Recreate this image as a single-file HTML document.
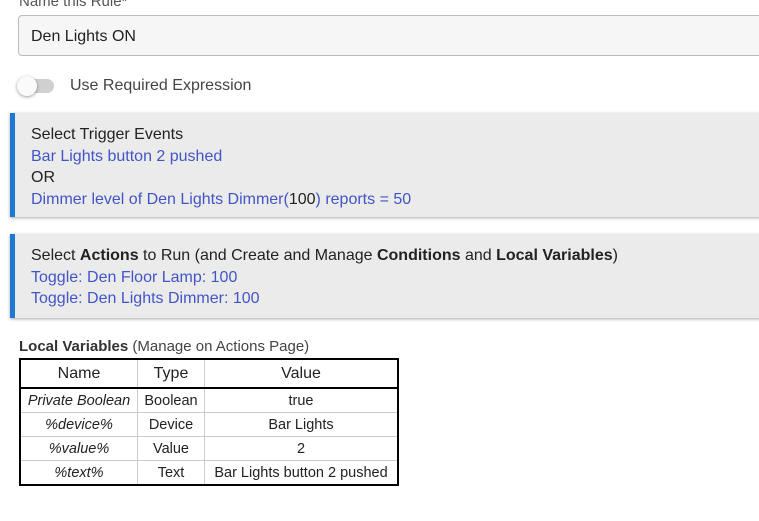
<!DOCTYPE html>
<html><head><style>
body{margin:0;width:759px;height:521px;background:#fff;font-family:"Liberation Sans",sans-serif;position:relative;overflow:hidden;color:#222}
.a{position:absolute}
.lbl{left:19px;top:-7px;font-size:15px;color:#555}
.inp{left:18px;top:15px;width:760px;height:41px;border:1px solid #bbb;border-radius:4px;background:#f6f6f6;box-sizing:border-box}
.inp span{position:absolute;left:12px;top:12px;font-size:16px;color:#222}
.track{left:25px;top:79px;width:29px;height:14px;border-radius:7px;background:#d0d0d0}
.knob{left:17px;top:76px;width:20px;height:20px;border-radius:50%;background:#fafafa;box-shadow:0 1px 3px rgba(0,0,0,.4)}
.tl{left:70px;top:77px;font-size:16px;color:#444}
.panel{left:10px;width:760px;background:#ebebeb;border-left:5px solid #1f78d1;box-shadow:0 1px 3px rgba(0,0,0,.35);box-sizing:border-box;padding:11px 0 0 16px;font-size:16px;line-height:21.5px}
.b{color:#4255c8}
table{position:absolute;left:19px;top:358px;border-collapse:collapse;border:2px solid #000;font-size:14.5px}
td,th{border:1px solid #ccc;text-align:center;padding:0 3px;height:23px;font-weight:normal}
th{font-size:16px;height:27px;border-bottom:2px solid #000}
td:first-child{font-style:italic}
</style></head><body>
<div class="a lbl">Name this Rule*</div>
<div class="a inp"><span>Den Lights ON</span></div>
<div class="a track"></div><div class="a knob"></div>
<div class="a tl">Use Required Expression</div>
<div class="a panel" style="top:113px;height:104px">Select Trigger Events<br><span class="b">Bar Lights button 2 pushed</span><br>OR<br><span class="b">Dimmer level of Den Lights Dimmer(</span>100<span class="b">) reports = 50</span></div>
<div class="a panel" style="top:234px;height:84px">Select <b>Actions</b> to Run (and Create and Manage <b>Conditions</b> and <b>Local Variables</b>)<br><span class="b">Toggle: Den Floor Lamp: 100</span><br><span class="b">Toggle: Den Lights Dimmer: 100</span></div>
<div class="a" style="left:19px;top:338px;font-size:15px;color:#444"><b style="color:#333">Local Variables</b> (Manage on Actions Page)</div>
<table>
<tr><th style="width:110px">Name</th><th style="width:60px">Type</th><th style="width:186px">Value</th></tr>
<tr><td>Private Boolean</td><td>Boolean</td><td>true</td></tr>
<tr><td>%device%</td><td>Device</td><td>Bar Lights</td></tr>
<tr><td>%value%</td><td>Value</td><td>2</td></tr>
<tr><td>%text%</td><td>Text</td><td>Bar Lights button 2 pushed</td></tr>
</table>
</body></html>
